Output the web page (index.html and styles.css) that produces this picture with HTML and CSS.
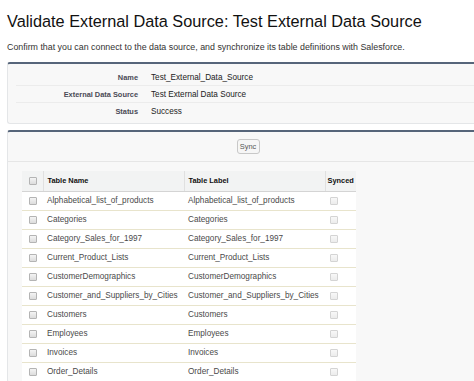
FILE: index.html
```html
<!DOCTYPE html>
<html lang="en">
<head>
    <meta charset="UTF-8">
    <title>Validate External Data Source</title>
    <link rel="stylesheet" href="styles.css">
</head>
<body>
    <div class="page">
        <h1 class="title">Validate External Data Source: Test External Data Source</h1>
        <p class="intro">Confirm that you can connect to the data source, and synchronize its table definitions with Salesforce.</p>

        <div class="block">
            <table class="detail">
                <tr><td class="label">Name</td><td class="value">Test_External_Data_Source</td></tr>
                <tr><td class="label">External Data Source</td><td class="value">Test External Data Source</td></tr>
                <tr><td class="label">Status</td><td class="value">Success</td></tr>
            </table>
        </div>

        <div class="block block-list">
            <div class="buttons">
                <button class="btn">Sync</button>
            </div>
            <table class="list">
                <thead>
                    <tr>
                        <th class="col-check"><span class="checkbox"></span></th>
                        <th class="col-name">Table Name</th>
                        <th class="col-label">Table Label</th>
                        <th class="col-synced">Synced</th>
                    </tr>
                </thead>
                <tbody id="rows">
                    <!-- filled from the list below -->
                </tbody>
            </table>
        </div>
    </div>

    <script>
        // tables returned by the external data source
        var tables = [
            "Alphabetical_list_of_products",
            "Categories",
            "Category_Sales_for_1997",
            "Current_Product_Lists",
            "CustomerDemographics",
            "Customer_and_Suppliers_by_Cities",
            "Customers",
            "Employees",
            "Invoices",
            "Order_Details"
        ];

        var rows = document.getElementById('rows');
        tables.forEach(function(name) {
            rows.innerHTML += `
                <tr>
                    <td class="col-check"><span class="checkbox"></span></td>
                    <td>${name}</td>
                    <td>${name}</td>
                    <td class="col-synced"><span class="checkbox disabled"></span></td>
                </tr>
            `;
        });
    </script>
</body>
</html>
```

FILE: styles.css
```css
html {
    overflow: hidden;
}
body {
    margin: 0;
    font-family: 'Liberation Sans', Arial, sans-serif;
    background: #fff;
    color: #222;
}
.page {
    padding: 0 0 0 7px;
}
.title {
    font-size: 16.3px;
    font-weight: normal;
    line-height: 22px;
    margin: 10px 0 0;
    color: #111;
}
.intro {
    font-size: 8.85px;
    line-height: 12px;
    margin: 9px 0 9px;
    color: #333;
}
.block {
    background: #f8f8f8;
    border-top: 2px solid #56657a;
    border-left: 1px solid #e4e6e8;
    border-bottom: 1px solid #e4e6e8;
    border-radius: 3px 0 0 3px;
    margin-right: -14px;
    padding: 5px 0 4px;
    margin-bottom: 6px;
}
.detail {
    border-collapse: collapse;
    margin-left: 8px;
    width: calc(100% - 8px);
}
.detail td {
    height: 16px;
    padding: 0;
    vertical-align: middle;
}
.detail tr + tr td {
    border-top: 1px solid #ececec;
}
.detail .label {
    width: 122px;
    text-align: right;
    font-size: 7.4px;
    font-weight: bold;
    color: #4a4a56;
}
.detail .value {
    padding-left: 13px;
    font-size: 8.2px;
    color: #222;
}
.block-list {
    padding: 0;
}
.buttons {
    display: flex;
    justify-content: center;
    padding: 7px 0 7px;
    border-bottom: 1px solid #e6e6e6;
}
.btn {
    font-family: 'Liberation Sans', Arial, sans-serif;
    font-size: 7.4px;
    color: #555;
    height: 15px;
    width: 23px;
    padding: 0;
    background: #f6f6f6;
    border: 1px solid #c8c8c8;
    border-radius: 3px;
    cursor: pointer;
}
.list {
    border-collapse: collapse;
    margin: 9px 0 0 14px;
    background: #fff;
    font-size: 8.2px;
}
.list th {
    height: 20px;
    background: #f2f3f3;
    border-bottom: 1px solid #d4d4d4;
    border-left: 1px solid #e0e0e0;
    text-align: left;
    font-size: 7.4px;
    font-weight: bold;
    color: #111;
    padding: 0 0 0 4px;
}
.list th:first-child {
    border-left: none;
}
.list td {
    height: 18px;
    border-bottom: 1px solid #e8e4cc;
    color: #4a4a4a;
    padding: 0 0 0 4px;
    white-space: nowrap;
}
.list .col-check {
    width: 21px;
    box-sizing: border-box;
    padding: 0 0 0 7px;
}
.list .col-name,
.list .col-label {
    width: 141px;
    box-sizing: border-box;
}
.list .col-synced {
    width: 31px;
    box-sizing: border-box;
    padding: 0 2px 0 2px;
}
.list td.col-synced {
    padding-left: 5px;
}
.checkbox {
    display: block;
    width: 6px;
    height: 6px;
    border: 1px solid #b4b4b4;
    border-radius: 1px;
    background: linear-gradient(#f4f4f4, #dcdcdc);
}
.checkbox.disabled {
    border-color: #d4d4d4;
    background: linear-gradient(#f8f8f8, #ececec);
}
```
